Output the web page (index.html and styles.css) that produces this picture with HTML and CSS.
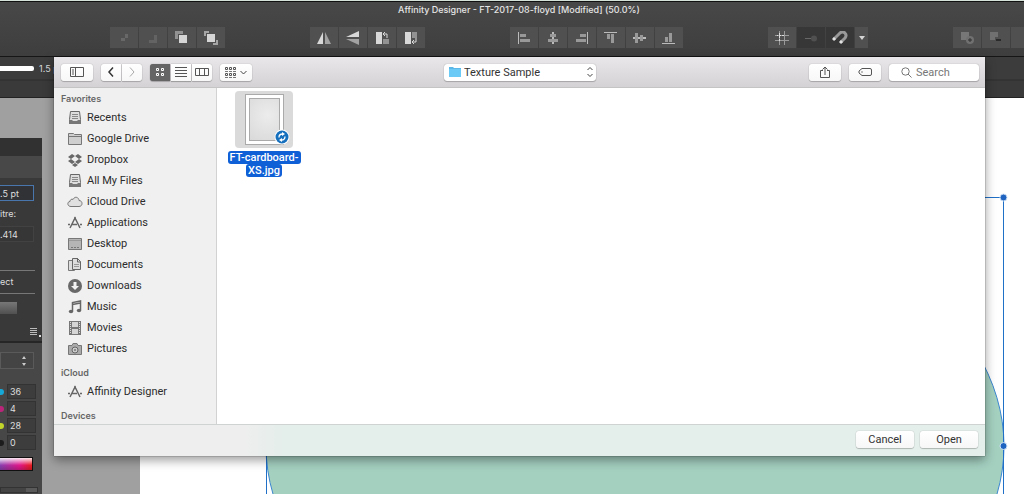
FILE: index.html
```html
<!DOCTYPE html>
<html lang="en">
<head>
  <meta charset="UTF-8">
  <meta name="viewport" content="width=device-width, initial-scale=1.0">
  <title>Affinity Designer</title>
  <link rel="stylesheet" href="styles.css">
</head>
<body>
  <div class="app">
    <header class="titlebar">
      <h1 class="window-title">Affinity Designer - FT-2017-08-floyd [Modified] (50.0%)</h1>
      <div class="tools">
        <div class="tool-group">
          <button class="tool" aria-label="Move to back"><svg width="16" height="14"><path d="M5 7h4v-4h3v4h-3v3H5z" fill="#686868"/></svg></button>
          <button class="tool" aria-label="Back one"><svg width="16" height="14"><path d="M4 9h5V4h3v8H4z" fill="#636363"/></svg></button>
          <button class="tool" aria-label="Forward one"><svg width="16" height="14"><path d="M1 0h8v3H4v5H1z" fill="#929292"/><rect x="4.500" y="3.500" width="9" height="9" fill="#d5d5d5" stroke="#505050"/></svg></button>
          <button class="tool" aria-label="Move to front"><svg width="16" height="14"><path d="M2 5V1h4M14 9v4h-4" fill="none" stroke="#a5a5a5" stroke-width="2"/><rect x="4" y="3" width="8" height="8" fill="#d5d5d5"/></svg></button>
        </div>
        <div class="tool-group">
          <button class="tool" aria-label="Flip horizontal"><svg width="16" height="14"><path d="M7 1v12H1z" fill="#d8d8d8"/><path d="M9 1v12h6z" fill="#a2a2a2"/></svg></button>
          <button class="tool" aria-label="Flip vertical"><svg width="16" height="14"><path d="M14 0v6H1z" fill="#d8d8d8"/><path d="M14 14V8H1z" fill="#a2a2a2"/></svg></button>
          <button class="tool" aria-label="Rotate left"><svg width="16" height="14"><path d="M2 1h6v12H2z" fill="#d8d8d8"/><path d="M9 8h6v5H9z" fill="#929292"/><path d="M10 3h3v4M11 1L9 3l2 2" fill="none" stroke="#d8d8d8"/></svg></button>
          <button class="tool" aria-label="Rotate right"><svg width="16" height="14"><path d="M2 1h6v12H2z" fill="#d8d8d8"/><path d="M9 1h5v6H9z" fill="#929292"/><path d="M13 7v4h-4M11 9l-2 2 2 2" fill="none" stroke="#d8d8d8"/></svg></button>
        </div>
        <div class="tool-group">
          <button class="tool" aria-label="Align left"><svg width="16" height="14"><path d="M2 1h1v12H2z" fill="#bbb"/><path d="M4 3h6v3H4zM4 8h10v3H4z" fill="#999"/></svg></button>
          <button class="tool" aria-label="Align centre"><svg width="16" height="14"><path d="M7 1h2v12H7z" fill="#bbb"/><path d="M5 3h6v3H5zM3 8h10v3H3z" fill="#999"/></svg></button>
          <button class="tool" aria-label="Align right"><svg width="16" height="14"><path d="M13 1h1v12h-1z" fill="#bbb"/><path d="M6 3h6v3H6zM2 8h10v3H2z" fill="#999"/></svg></button>
          <button class="tool" aria-label="Align top"><svg width="16" height="14"><path d="M1 1h13v1H1z" fill="#bbb"/><path d="M4 3h3v5H4zM8 3h3v9H8z" fill="#999"/></svg></button>
          <button class="tool" aria-label="Align middle"><svg width="16" height="14"><path d="M1 6h13v2H1z" fill="#bbb"/><path d="M3 2h3v10H3zM8 4h3v6H8z" fill="#999"/></svg></button>
          <button class="tool" aria-label="Align bottom"><svg width="16" height="14"><path d="M1 12h13v1H1z" fill="#bbb"/><path d="M4 6h3v5H4zM8 2h3v9H8z" fill="#999"/></svg></button>
        </div>
        <div class="tool-group">
          <button class="tool" aria-label="Snap to grid"><svg width="16" height="14"><path d="M5.500 0v14M10.500 0v14M1 4.500h14M1 9.500h14" stroke="#999" fill="none"/><path d="M5.500 2v9M10 4.500h-7" stroke="#ddd" fill="none" stroke-dasharray="2 1"/></svg></button>
          <button class="tool pressed" aria-label="Move by whole pixels"><svg width="16" height="14"><path d="M2 7.500h6" stroke="#686868"/><circle cx="11" cy="7.500" r="3" fill="#505050"/></svg></button>
          <button class="tool pressed" aria-label="Snapping"><svg width="16" height="14"><path d="M2 8L8 2c3-3 8 1 5 5l-4 4" fill="none" stroke="#999" stroke-width="3"/><path d="M1 9l2-2M8 12l2-2" stroke="#e2e2e2" stroke-width="3"/></svg></button>
          <button class="tool arrow" aria-label="Snapping options"><svg width="8" height="6"><path d="M1 1h6L4 5z" fill="#d5d5d5"/></svg></button>
        </div>
        <div class="tool-group">
          <button class="tool" aria-label="Add"><svg width="16" height="14"><rect x="2" y="1" width="8" height="8" fill="#777"/><circle cx="11" cy="9" r="4" fill="#707070"/><path d="M11 7v4M9 9h4" stroke="#303030"/></svg></button>
          <button class="tool" aria-label="Subtract"><svg width="16" height="14"><path d="M2 1h8v5H7v3H2z" fill="#707070"/><path d="M8 9h5" stroke="#2a2a2a" stroke-width="2"/></svg></button>
          <button class="tool" aria-label="Intersect"></button>
        </div>
      </div>
    </header>

    <div class="context-bar">
      <span class="stroke-sample"></span>
      <span>1.5 pt</span>
    </div>

    <main class="workspace">
      <aside class="studio">
        <div class="studio-tabs"></div>
        <div class="studio-options"></div>
        <div class="stroke-panel">
          <input class="field focused" type="text" value=".5 pt" aria-label="Width">
          <label class="field-label" for="mitre">itre:</label>
          <input class="field" id="mitre" type="text" value=".414">
          <p class="divided">ect</p>
          <button class="wide-button" aria-label="Properties"></button>
          <button class="panel-menu" aria-label="Panel menu"><svg width="11" height="9"><path d="M0 .5h7M0 2.500h7M0 4.500h7M0 6.500h7" stroke="#bbb"/><path d="M9 7h2v2H9z" fill="#ddd"/></svg></button>
        </div>
        <div class="colour-panel">
          <button class="mode" aria-label="Colour mode"><svg width="6" height="10"><path d="M1 3l2-3 2 3zM1 7l2 3 2-3z" fill="#ccc"/></svg></button>
          <div class="channels">
            <label class="channel"><span class="knob cyan"></span><input type="text" value="36" aria-label="Cyan"></label>
            <label class="channel"><span class="knob magenta"></span><input type="text" value="4" aria-label="Magenta"></label>
            <label class="channel"><span class="knob yellow"></span><input type="text" value="28" aria-label="Yellow"></label>
            <label class="channel"><span class="knob black"></span><input type="text" value="0" aria-label="Black"></label>
          </div>
          <div class="spectrum"></div>
          <div class="panel-foot"></div>
        </div>
      </aside>

      <div class="canvas">
        <svg class="artwork" viewBox="0 0 884 396" preserveAspectRatio="xMidYMid slice">
          <ellipse cx="495" cy="348" rx="369" ry="248" fill="#a4d0c0" stroke="#3b86d0"/>
          <rect x="126.500" y="99.500" width="737" height="497" fill="none" stroke="#2070c8"/>
          <g fill="#1f63c0" stroke="#cfe2f6">
            <circle cx="863.500" cy="99.500" r="3.500"/>
            <circle cx="863.500" cy="348" r="3.500"/>
          </g>
        </svg>
      </div>
    </main>

    <section class="dialog" role="dialog" aria-label="Open">
      <div class="dialog-bar">
        <div class="bar-left">
          <button class="btn" aria-label="Toggle sidebar"><svg width="14" height="10"><path d="M.5.500h13v9H.5zM5.500.500v9M2 3h2M2 5h2M2 7h2" fill="none" stroke="#555"/></svg></button>
          <div class="segments">
            <button class="btn" aria-label="Back"><svg width="8" height="12"><path d="M6 1.500L2 6l4 4.500" fill="none" stroke="#333" stroke-width="1.500"/></svg></button>
            <button class="btn" aria-label="Forward"><svg width="8" height="12"><path d="M2 1.500L6 6l-4 4.500" fill="none" stroke="#aaa"/></svg></button>
          </div>
          <div class="segments">
            <button class="btn selected" aria-label="Icons"><svg width="10" height="10"><path d="M1.500 1.500h2v2h-2zM6.500 1.500h2v2h-2zM1.500 6.500h2v2h-2zM6.500 6.500h2v2h-2z" fill="none" stroke="#fff"/></svg></button>
            <button class="btn" aria-label="List"><svg width="12" height="10"><path d="M0 .5h12M0 3.500h12M0 6.500h12M0 9.500h12" stroke="#555"/></svg></button>
            <button class="btn" aria-label="Columns"><svg width="14" height="10"><path d="M.5 1.500h13v7H.5zM4.500 1.500v7M9.500 1.500v7" fill="none" stroke="#555"/></svg></button>
          </div>
          <button class="btn" aria-label="Arrange"><svg width="22" height="11"><path d="M.5.500h2v2h-2zM4.500.500h2v2h-2zM8.500.500h2v2h-2zM.5 6.500h2v2h-2zM4.500 6.500h2v2h-2zM8.500 6.500h2v2h-2z" fill="none" stroke="#555"/><path d="M0 4.500h12M0 10.500h12" stroke="#777" stroke-dasharray="3 1"/><path d="M15.500 4L18.500 7l3-3" fill="none" stroke="#444"/></svg></button>
        </div>

        <div class="location">
          <svg class="folder" width="14" height="12"><path d="M1 1h4l1 1h7v9H1z" fill="#5bb7e8"/><path d="M1 3h12v8H1z" fill="#6ccaf7"/></svg>
          <select class="location-select" aria-label="Location">
            <option>Texture Sample</option>
          </select>
          <svg class="stepper" width="8" height="12"><path d="M1.500 4L4 1.500 6.500 4M1.500 8L4 10.500 6.500 8" fill="none" stroke="#444"/></svg>
        </div>

        <div class="bar-right">
          <button class="btn" aria-label="Share"><svg width="12" height="13"><path d="M4 4.500H1.500v7h9v-7H8M6 9V1M3.500 3.500L6 1l2.500 2.500" fill="none" stroke="#555"/></svg></button>
          <button class="btn" aria-label="Tags"><svg width="14" height="10"><path d="M4 1.500h8q1.500 0 1.500 1.500v4q0 1.500-1.500 1.500H4L1 6V4z" fill="none" stroke="#555"/><circle cx="4" cy="5" r=".7" fill="#555"/></svg></button>
          <label class="search">
            <svg width="11" height="11"><circle cx="4.500" cy="4.500" r="3.700" fill="none" stroke="#777"/><path d="M7 7l3.500 3.500" stroke="#777"/></svg>
            <input type="search" placeholder="Search" aria-label="Search">
          </label>
        </div>
      </div>

      <div class="dialog-body">
        <nav class="sidebar">
          <h2>Favorites</h2>
          <ul>
            <li><a href="#"><svg width="16" height="14"><path d="M3.500.500h9l1 8v4h-11v-4z" fill="#ddd" stroke="#666"/><path d="M2 9h3l1 1h4l1-1h3v4H2z" fill="#777"/><path d="M5 3.500h6M5 5.500h6M5 7.500h6" stroke="#888"/></svg>Recents</a></li>
            <li><a href="#"><svg width="16" height="14"><path d="M1.500 12.500v-11h5l1 1h7v10z" fill="#cfcfcf" stroke="#777"/><path d="M1 4.500h14" stroke="#777"/></svg>Google Drive</a></li>
            <li><a href="#"><svg width="16" height="14"><path d="M5 1l3 2-4 3-3-2zM11 1L8 3l4 3 3-2zM1 8l3-2 4 3-3 2zM15 8l-3-2-4 3 3 2zM8 10l3 2-3 2-3-2z" fill="#686868"/></svg>Dropbox</a></li>
            <li><a href="#"><svg width="16" height="14"><path d="M3.500.500h9l1 8v4h-11v-4z" fill="#ddd" stroke="#666"/><path d="M2 9h3l1 1h4l1-1h3v4H2z" fill="#777"/><path d="M5 3.500h6M5 5.500h6M5 7.500h6" stroke="#888"/></svg>All My Files</a></li>
            <li><a href="#"><svg width="16" height="14"><path d="M4 11.500c-4 0-4-5-1-5 0-2 2-3 3-2 2-4 6-2 6 1 4 0 4 6 0 6z" fill="#e0e0e0" stroke="#777"/></svg>iCloud Drive</a></li>
            <li><a href="#"><svg width="16" height="14"><path d="M3 12L8 2l5 10M1 8.500h2M5 8.500h5M13 8.500h2M7 2h2" fill="none" stroke="#666" stroke-width="1.500"/></svg>Applications</a></li>
            <li><a href="#"><svg width="16" height="14"><path d="M1.500 1.500h13v11h-13z" fill="#b5b5b5" stroke="#777"/><path d="M2 3.500h12" stroke="#999"/><path d="M4 10.500h8" stroke="#777" stroke-width="1" stroke-dasharray="2 1"/></svg>Desktop</a></li>
            <li><a href="#"><svg width="16" height="14"><path d="M1.500 2.500h6v10h-6z" fill="#ddd" stroke="#777"/><path d="M5.500.500h5l3 3v8h-8z" fill="#ddd" stroke="#666"/><path d="M10.500 0v4h3" fill="none" stroke="#666"/><path d="M7 6.500h5M7 8.500h5" stroke="#999"/></svg>Documents</a></li>
            <li><a href="#"><svg width="16" height="14"><circle cx="8" cy="7" r="7" fill="#686868"/><path d="M6.500 3h3v4H12l-4 4-4-4h2.500z" fill="#f2f2f2"/></svg>Downloads</a></li>
            <li><a href="#"><svg width="16" height="14"><path d="M5.500 11V2.500l8-1.500v9M5.500 4.500l8-1.500" fill="none" stroke="#666" stroke-width="1.500"/><ellipse cx="4" cy="11.500" rx="2.200" ry="1.700" fill="#666"/><ellipse cx="12" cy="10.500" rx="2.200" ry="1.700" fill="#666"/></svg>Music</a></li>
            <li><a href="#"><svg width="16" height="14"><path d="M2 0h12v14H2z" fill="#777"/><path d="M5 1h6v5H5zM5 8h6v5H5z" fill="#d5d5d5"/><path d="M3.500 1v12M12.500 1v12" stroke="#ddd" stroke-dasharray="1 1"/></svg>Movies</a></li>
            <li><a href="#"><svg width="16" height="14"><path d="M1.500 3.500H5l1-2h4l1 2h3.500v9h-13z" fill="#aaa" stroke="#777"/><circle cx="8" cy="8" r="3" fill="#ccc" stroke="#666"/><circle cx="8" cy="8" r="1" fill="#777"/></svg>Pictures</a></li>
          </ul>
          <h2>iCloud</h2>
          <ul>
            <li><a href="#"><svg width="16" height="14"><path d="M3 12L8 2l5 10M1 8.500h2M5 8.500h5M13 8.500h2M7 2h2" fill="none" stroke="#666" stroke-width="1.500"/></svg>Affinity Designer</a></li>
          </ul>
          <h2>Devices</h2>
        </nav>

        <div class="files">
          <a class="file" href="#">
            <span class="thumb">
              <span class="paper"></span>
              <svg class="sync" width="16" height="16"><circle cx="8" cy="8" r="7.500" fill="#fff"/><circle cx="8" cy="8" r="6.500" fill="#1670bd"/><path d="M5 8.500c0-2 1.500-3.500 3.500-3.500M11 7.500c0 2-1.500 3.500-3.500 3.500" fill="none" stroke="#fff" stroke-width="1.300"/><path d="M8 3l3 2-3 2zM8 9l-3 2 3 2z" fill="#fff"/></svg>
            </span>
            <span class="file-name"><span>FT-cardboard-<br>XS.jpg</span></span>
          </a>
        </div>
      </div>

      <footer class="dialog-foot">
        <button class="btn">Cancel</button>
        <button class="btn">Open</button>
      </footer>
    </section>
  </div>
</body>
</html>
```
FILE: styles.css
```css
* {
  box-sizing: border-box;
}

body {
  margin: 0;
  font-family: Roboto, "Liberation Sans", sans-serif;
  font-size: 11px;
  color: #333;
}

button, input, select {
  font: inherit;
  color: inherit;
  margin: 0;
  padding: 0;
  border: none;
}

button svg {
  display: block;
}

.app {
  position: relative;
  display: flex;
  flex-direction: column;
  min-height: 100vh;
  overflow: hidden;
}

/* Title bar and tools */
.titlebar {
  height: 57px;
  border-top: 1px solid #d5e2da;
  border-bottom: 1px solid #161616;
  background: linear-gradient(#484848, #3e3e3e);
  box-shadow: inset 0 1px #111;
  overflow: hidden;
}

.window-title {
  margin: 0;
  padding: 1px 0 0 14px;
  font-family: Inter, "Liberation Sans", sans-serif;
  font-size: 9px;
  font-weight: 500;
  line-height: 16px;
  text-align: center;
  color: #e4e4e4;
}

.tools {
  display: flex;
  gap: 85px;
  padding: 9px 0 0 110px;
}

.tool-group {
  display: flex;
  flex-shrink: 0;
  gap: 1px;
}

.tool {
  display: flex;
  align-items: center;
  justify-content: center;
  width: 28px;
  height: 21px;
  background: #505050;
}

.tool.pressed {
  background: #373737;
}

.tool.arrow {
  width: 13px;
}

.context-bar {
  display: flex;
  gap: 5px;
  height: 41px;
  border-bottom: 1px solid #222;
  background: linear-gradient(#3c3c3c 22px, #2c2c2c 23px, #3a3a3a 24px);
  font-family: Inter, "Liberation Sans", sans-serif;
  font-size: 9px;
  line-height: 23px;
  color: #ddd;
}

.stroke-sample {
  width: 34px;
  height: 5px;
  margin-top: 9px;
  border-radius: 0 2px 2px 0;
  background: #fff;
}

/* Document area */
.workspace {
  display: flex;
  flex: 1;
  background: #a0a0a0;
}

.studio {
  width: 42px;
  margin: 40px 98px 0 0;
  font-family: Inter, "Liberation Sans", sans-serif;
  font-size: 9px;
  color: #ddd;
  background: #393939;
  overflow: hidden;
}

.studio-tabs {
  height: 18px;
  background: #313131;
}

.studio-options {
  height: 22px;
  background: #484848;
}

.stroke-panel {
  display: flex;
  flex-direction: column;
  align-items: flex-start;
  height: 163px;
  padding-top: 7px;
}

.field {
  width: 34px;
  height: 16px;
  border: 1px solid #424242;
  border-left: none;
  background: #363636;
}

.field.focused {
  border-color: #4a76ae;
  background: #303236;
}

.field-label {
  line-height: 25px;
}

.divided {
  width: 35px;
  margin: 28px 0 8px;
  border: solid #777;
  border-width: 1px 0;
  line-height: 22px;
}

.wide-button {
  width: 17px;
  flex: 0 0 12px;
  background: linear-gradient(#777, #505050);
}

.panel-menu {
  align-self: flex-end;
  margin: 14px 1px 0 0;
  background: none;
}

.colour-panel {
  height: 153px;
  padding-top: 9px;
  border-top: 2px solid #262626;
  background: #474747;
}

.mode {
  display: flex;
  align-items: center;
  justify-content: flex-end;
  width: 34px;
  height: 17px;
  padding-right: 6px;
  border: 1px solid #5a5a5a;
  background: #444;
}

.channels {
  display: flex;
  flex-direction: column;
  gap: 2px;
  padding-top: 15px;
}

.channel {
  display: flex;
  align-items: center;
  gap: 3px;
}

.channel input {
  width: 29px;
  height: 15px;
  padding-left: 2px;
  border: 1px solid #333;
  background: #3d3d3d;
}

.knob {
  width: 4px;
  height: 6px;
  border-radius: 0 3px 3px 0;
}

.cyan { background: #16a9d8; }
.magenta { background: #b82579; }
.yellow { background: #c0d42a; }
.black { background: #1c1c1c; }

.spectrum {
  width: 33px;
  height: 14px;
  margin-top: 7px;
  border: 1px solid #111;
  border-left: none;
  background: linear-gradient(rgba(255, 255, 255, 0.9), transparent 60%, rgba(0, 0, 0, 0.2)), linear-gradient(90deg, #8a3fb0, #e0178b 60%, #e81c1c);
}

.panel-foot {
  height: 6px;
  margin: 16px 4px 0 0;
  border: 1px solid #333;
  background: linear-gradient(90deg, #444 25px, #5a5a5a 25px);
}

.canvas {
  position: relative;
  flex: 1;
  background: #fff;
}

.artwork {
  position: absolute;
  width: 100%;
  height: 100%;
}

/* Open dialog, drops down from the title bar */
.dialog {
  position: absolute;
  top: 57px;
  right: 39px;
  bottom: 38px;
  left: 54px;
  display: flex;
  flex-direction: column;
  background: #ededed;
  box-shadow: 0 0 1px rgba(0, 0, 0, 0.7), 0 4px 10px rgba(0, 0, 0, 0.4);
}

.dialog-bar {
  display: flex;
  align-items: center;
  justify-content: space-between;
  height: 31px;
  padding: 0 6px 0 7px;
  border-bottom: 1px solid #c4c4c4;
  background: linear-gradient(#e9e7e9, #d4d2d4);
}

.bar-left, .bar-right {
  display: flex;
  flex: 1;
  gap: 8px;
}

.bar-right {
  justify-content: flex-end;
}

.btn {
  display: flex;
  align-items: center;
  justify-content: center;
  width: 32px;
  height: 17px;
  border-radius: 3px;
  background: linear-gradient(#fff, #f7f7f7);
  box-shadow: 0 0 1px rgba(0, 0, 0, 0.4), 0 1px 1px rgba(0, 0, 0, 0.2);
}

.segments {
  display: flex;
  gap: 1px;
}

.segments .btn {
  width: 20px;
  border-radius: 0;
}

.segments .btn:first-child {
  border-radius: 3px 0 0 3px;
}

.segments .btn:last-child {
  border-radius: 0 3px 3px 0;
}

.btn.selected {
  background: #656565;
}

.location {
  position: relative;
  width: 152px;
}

.location-select {
  display: block;
  width: 100%;
  height: 17px;
  padding-left: 20px;
  border-radius: 3px;
  background: #fff;
  box-shadow: 0 0 1px rgba(0, 0, 0, 0.4), 0 1px 1px rgba(0, 0, 0, 0.2);
  appearance: none;
}

.folder {
  position: absolute;
  top: 2px;
  left: 4px;
}

.stepper {
  position: absolute;
  top: 2px;
  right: 2px;
}

.search {
  display: flex;
  align-items: center;
  gap: 4px;
  width: 90px;
  height: 17px;
  padding-left: 12px;
  border-radius: 3px;
  background: #fff;
  box-shadow: 0 0 1px rgba(0, 0, 0, 0.4), 0 1px 1px rgba(0, 0, 0, 0.2);
}

.search input {
  width: 60px;
  background: none;
  appearance: none;
}

.search input::placeholder {
  color: #777;
}

.dialog-body {
  display: flex;
  flex: 1;
  min-height: 0;
}

.sidebar {
  width: 163px;
  padding: 2px 0 0 7px;
  border-right: 1px solid #d2d2d2;
  background: #f0f0f0;
  overflow: hidden;
}

.sidebar h2 {
  margin: 0;
  font-family: Inter, "Liberation Sans", sans-serif;
  font-size: 9px;
  font-weight: 600;
  line-height: 17px;
  color: #666;
}

.sidebar ul {
  margin: 0 0 5px;
  padding: 0 0 0 6px;
  list-style: none;
}

.sidebar a {
  display: flex;
  align-items: center;
  gap: 4px;
  height: 21px;
  color: #2c2c2c;
  text-decoration: none;
}

.files {
  flex: 1;
  padding: 3px 12px;
  background: #fff;
}

.file {
  display: flex;
  flex-direction: column;
  align-items: center;
  gap: 3px;
  width: 70px;
  color: #fff;
  text-decoration: none;
}

.thumb {
  position: relative;
  display: flex;
  align-items: center;
  justify-content: center;
  width: 58px;
  height: 57px;
  border-radius: 4px;
  background: #dadada;
}

.paper {
  width: 37px;
  height: 49px;
  border: 3px solid #fff;
  outline: 1px solid #aaa;
  background: radial-gradient(circle at 60% 40%, #ececec, #d8d8d8);
  box-shadow: inset 0 0 0 1px #aaa;
}

.sync {
  position: absolute;
  right: 3px;
  bottom: 3px;
}

.file-name {
  font-weight: 500;
  line-height: 13px;
  text-align: center;
  white-space: nowrap;
}

.file-name span {
  padding: 0 2px;
  border-radius: 3px;
  background: #0f5fd7;
  -webkit-box-decoration-break: clone;
  box-decoration-break: clone;
}

.dialog-foot {
  display: flex;
  align-items: center;
  justify-content: flex-end;
  gap: 6px;
  height: 32px;
  padding: 0 7px 2px 0;
  border-top: 1px solid #cfd4d2;
  background: linear-gradient(90deg, #eee 190px, #e4eeea 230px);
}

.dialog-foot .btn {
  width: 58px;
}
```
